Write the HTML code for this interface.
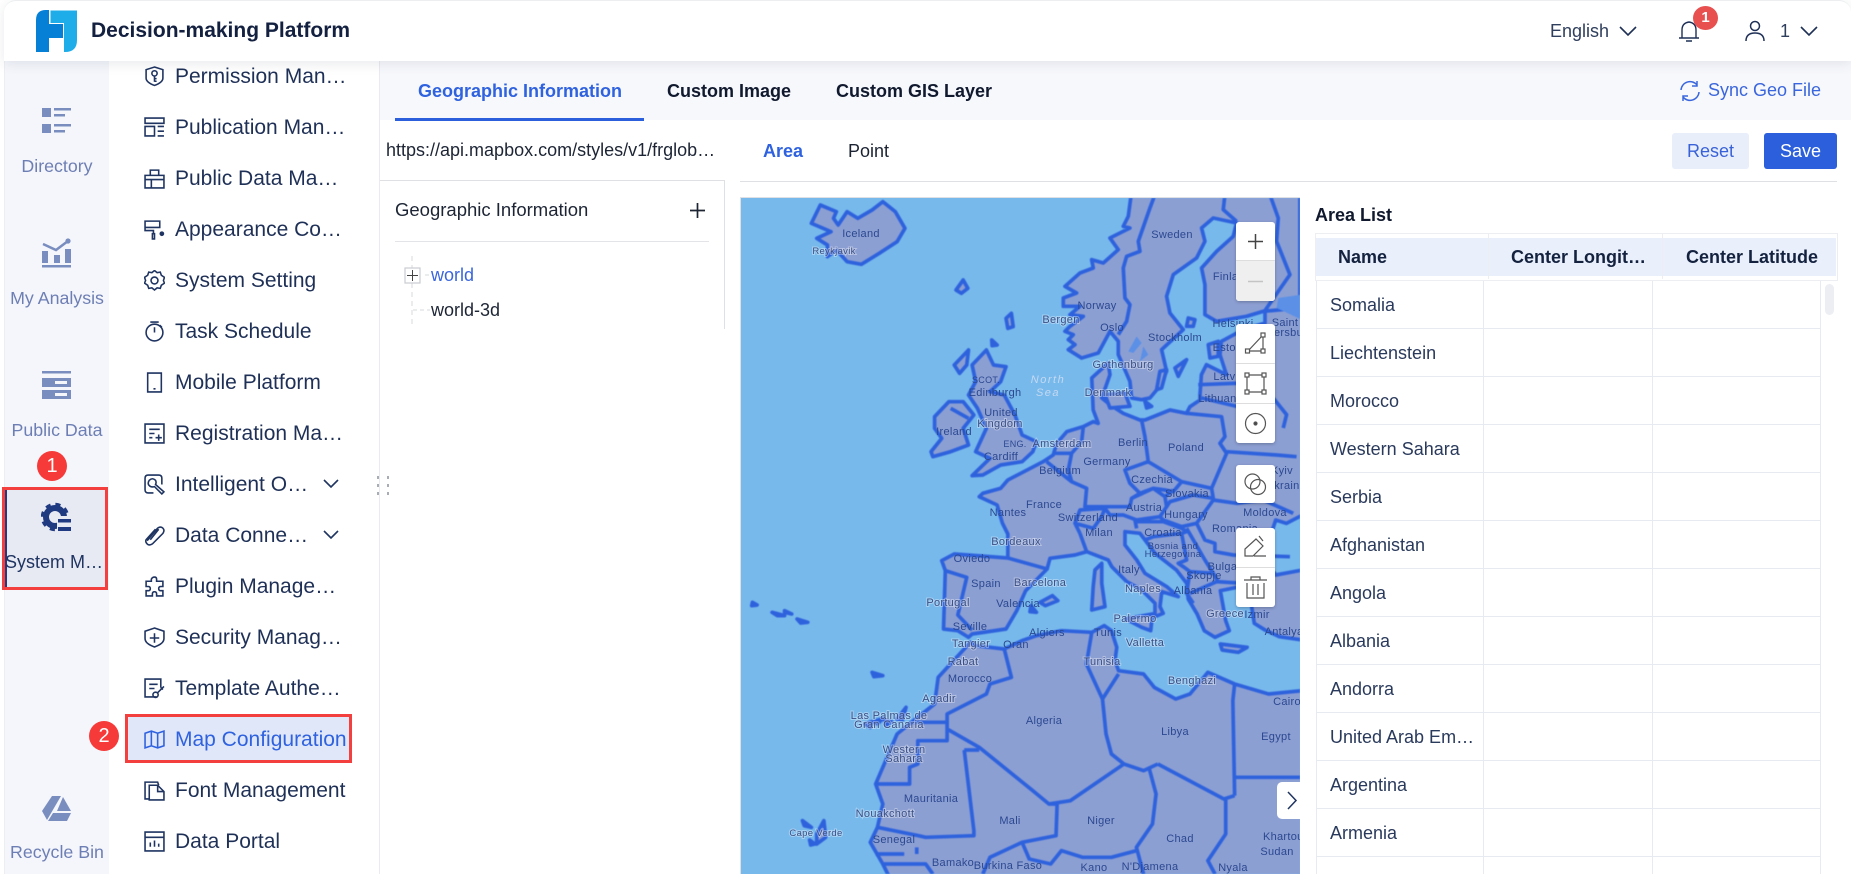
<!DOCTYPE html>
<html lang="en"><head><meta charset="utf-8"><title>Map Configuration</title>
<style>
html,body{margin:0;padding:0;background:#fff;font-family:"Liberation Sans",Arial,sans-serif;color:#1f3057}
#root{position:relative;width:1851px;height:874px;overflow:hidden;background:#fff}
.a{position:absolute}
.t{position:absolute;white-space:nowrap;line-height:30px;height:30px}
.n{font-size:21px;left:175px;color:#1f3057;margin-top:1px}
.r{font-size:17.800px;width:108px;left:3px;text-align:center;color:#6d7eb4}
.i{position:absolute;left:144px;width:21px;height:21px;fill:none;stroke:#1f3461;stroke-width:1.500}
.row{position:absolute;left:1316px;width:505px;height:47px;border-bottom:1px solid #e8eaf1}
.c{font-size:18px;left:1330px;color:#2a3a5c}
.h{font-size:18px;font-weight:bold;color:#14223f}
.ctl{position:absolute;left:1236px;width:39px;background:#fff;border-radius:3px;box-shadow:0 1px 3px rgba(0,0,0,.25)}
.ctl svg{display:block;position:absolute;left:7px;width:25px;height:25px;fill:none;stroke:#555;stroke-width:1.200}
.sep{position:absolute;left:0;width:39px;height:1px;background:#ddd}
#m text{font-size:11px;fill:#2b4890;text-anchor:middle;letter-spacing:.3px}
#m text.w{stroke:rgba(255,255,255,.35);stroke-width:2px;paint-order:stroke;fill:#3a4f85}
path{vector-effect:non-scaling-stroke}
.i path,.ctl path{vector-effect:none}
</style></head><body><div id="root">

<!-- rail -->
<div class="a" style="left:4px;top:61px;width:104px;height:813px;background:#f4f6fb;border-left:1px solid #eceef2;border-right:1px solid #eceef2"></div>
<div class="a" style="left:109px;top:61px;width:270px;height:813px;background:#fff;border-right:1px solid #e9ebf0"></div>
<div class="a" style="left:5px;top:489px;width:101px;height:99px;background:#e7e9f3"></div>
<div class="a" style="left:5px;top:489px;width:2px;height:99px;background:#1f3a80"></div>

<!-- rail icons -->
<svg class="a" style="left:42px;top:108px" width="30" height="26" fill="#7a8dbf"><rect x="0" y="0" width="9" height="9"/><rect x="0" y="16" width="9" height="9"/><rect x="12" y="0" width="17" height="2.500"/><rect x="12" y="6" width="11" height="2.500"/><rect x="12" y="16" width="17" height="2.500"/><rect x="12" y="22" width="11" height="2.500"/></svg>
<svg class="a" style="left:42px;top:238px" width="30" height="30" fill="#7a8dbf"><rect x="0" y="27" width="29" height="2.500"/><rect x="0" y="13" width="6" height="12"/><rect x="12" y="17" width="6" height="8"/><rect x="23" y="11" width="6" height="14"/><path d="M1 6 L14 12 L26 3" fill="none" stroke="#7a8dbf" stroke-width="2.500"/><circle cx="26" cy="3" r="2.600"/></svg>
<svg class="a" style="left:42px;top:370px" width="30" height="30" fill="#7a8dbf"><rect x="0" y="1" width="29" height="2.500"/><path d="M0 8h29v9H0zM13 11v3h12v-3zM0 20h29v9H0zM13 23v3h12v-3z" fill-rule="evenodd"/></svg>
<svg class="a" style="left:41px;top:500px" width="32" height="33"><circle cx="14" cy="17" r="9" fill="none" stroke="#1f3a80" stroke-width="6"/><circle cx="14" cy="17" r="12.500" fill="none" stroke="#1f3a80" stroke-width="3.500" stroke-dasharray="5 4.820"/><rect x="16" y="16" width="16" height="17" fill="#e7e9f3"/><rect x="17" y="19" width="13" height="3.500" fill="#1f3a80"/><rect x="17" y="27" width="13" height="4" fill="#1f3a80"/></svg>
<svg class="a" style="left:42px;top:795px" width="30" height="27" fill="#7a8dbf"><path d="M10 1H19L5 25 0 16z"/><path d="M21 2L29 16H15z"/><path d="M11 18H29L25 26H6z"/></svg>

<div class="t r" style="top:151px">Directory</div>
<div class="t r" style="top:283px">My Analysis</div>
<div class="t r" style="top:415px">Public Data</div>
<div class="t r" style="top:547px;color:#1f3461;font-size:18px;left:3px;text-align:left;padding-left:2px">System M…</div>
<div class="t r" style="top:837px">Recycle Bin</div>

<!-- nav selection -->
<div class="a" style="left:125px;top:714px;width:227px;height:49px;background:#e0e7f9"></div>

<!-- nav icons -->
<svg class="i" style="top:66px" viewBox="0 0 20 20"><path d="M10 1l8 2.500v8q0 4-8 7q-8-3-8-7v-8z"/><circle cx="10" cy="7" r="2.500"/><path d="M10 9.500V15M10 12h2M10 14.500h2"/></svg>
<svg class="i" style="top:117px" viewBox="0 0 20 20"><path d="M1 1h18v5H1zM1 9h9v9H1zM13 9h6M13 13.500h6M13 18h6"/></svg>
<svg class="i" style="top:168px" viewBox="0 0 20 20"><path d="M1 7h18v12H1zM6 7V2h8v5M1 11h18M7 11v8"/></svg>
<svg class="i" style="top:219px" viewBox="0 0 20 20"><path d="M1 2h14v6H1zM1 8v3h8v3M8 14h2v5H8z"/><circle cx="17" cy="14" r="1.500" fill="#1f3461"/></svg>
<svg class="i" style="top:270px" viewBox="0 0 20 20"><path d="M10 .5l2.500 2 3-.5 1 3 3 2-1 3 1 2.500-3 2-1 3-3-.5-2.500 2-2.500-2-3 .5-1-3-3-2 1-2.500-1-3 3-2 1-3 3 .5z"/><circle cx="10" cy="10" r="3.300"/></svg>
<svg class="i" style="top:321px" viewBox="0 0 20 20"><circle cx="10" cy="11" r="8"/><path d="M6 1h8M10 6v5M15 4l2 2"/></svg>
<svg class="i" style="top:372px" viewBox="0 0 20 20"><path d="M3.500 1h13v18h-13zM9 16h2"/></svg>
<svg class="i" style="top:423px" viewBox="0 0 20 20"><path d="M1 1h18v18H1zM5 6h10M5 10h5M11 14h6M14 11v6M5 14h3"/></svg>
<svg class="i" style="top:474px" viewBox="0 0 20 20"><path d="M9 18H4q-3 0-3-3V4q0-3 3-3h10q3 0 3 3v6"/><path d="M5 6q3-3 6 0 1 2 0 4l8 7-2 2-7-7q-3 1-5-1t0-5z"/></svg>
<svg class="i" style="top:525px" viewBox="0 0 20 20"><path d="M3 15L13 3q3-2 5 0t0 5L8 18q-3 2-5 0t-1-4L11 4M6 14l8-10"/></svg>
<svg class="i" style="top:576px" viewBox="0 0 20 20"><path d="M7 5V3q1-2 3-2t2 2v2h6v5h-2q-2 0-2 2t2 2h2v5h-6v-2q0-2-2-2t-2 2v2H2v-5h2q2 0 2-2T4 10H2V5z"/></svg>
<svg class="i" style="top:627px" viewBox="0 0 20 20"><path d="M10 1l9 3v7q0 5-9 8q-9-3-9-8V4z"/><path d="M10 6v9M5.500 10.500h9"/></svg>
<svg class="i" style="top:678px" viewBox="0 0 20 20"><path d="M12 18H1V1h15v8M5 6h8M5 10h5"/><circle cx="11" cy="16" r="2.500"/><path d="M13 14l6-6M16 9l2 2"/></svg>
<svg class="i" style="top:729px;stroke:#2f62df" viewBox="0 0 20 20"><path d="M1 4l6-2 6 2 6-2v14l-6 2-6-2-6 2zM7 2v14M13 4v14"/></svg>
<svg class="i" style="top:780px" viewBox="0 0 20 20"><path d="M5 18H1V2h12l1 3M5 5h8l6 6v8H5zM13 5v6h6"/></svg>
<svg class="i" style="top:831px" viewBox="0 0 20 20"><path d="M1 1h18v18H1zM1 6h18M6 15v-4M10 15V9M14 15v-3"/></svg>

<div class="t n" style="top:61px">Permission Man…</div>
<div class="t n" style="top:112px">Publication Man…</div>
<div class="t n" style="top:163px">Public Data Ma…</div>
<div class="t n" style="top:214px">Appearance Co…</div>
<div class="t n" style="top:265px">System Setting</div>
<div class="t n" style="top:316px">Task Schedule</div>
<div class="t n" style="top:367px">Mobile Platform</div>
<div class="t n" style="top:418px">Registration Ma…</div>
<div class="t n" style="top:469px">Intelligent O…</div>
<div class="t n" style="top:520px">Data Conne…</div>
<div class="t n" style="top:571px">Plugin Manage…</div>
<div class="t n" style="top:622px">Security Manag…</div>
<div class="t n" style="top:673px">Template Authe…</div>
<div class="t n" style="top:724px;color:#2f62df">Map Configuration</div>
<div class="t n" style="top:775px">Font Management</div>
<div class="t n" style="top:826px">Data Portal</div>
<svg class="a" style="left:323px;top:478px" width="17" height="12" fill="none" stroke="#1f3461" stroke-width="1.600"><path d="M1 2l7 7 7-7"/></svg>
<svg class="a" style="left:323px;top:529px" width="17" height="12" fill="none" stroke="#1f3461" stroke-width="1.600"><path d="M1 2l7 7 7-7"/></svg>

<!-- main top -->
<div class="a" style="left:380px;top:61px;width:1471px;height:59px;background:#f7f8fc"></div>
<div class="a" style="left:395px;top:118px;width:249px;height:3px;background:#2b5fdb"></div>
<div class="t" style="left:418px;top:76px;font-size:18px;font-weight:bold;color:#2f62df">Geographic Information</div>
<div class="t" style="left:667px;top:76px;font-size:18px;font-weight:bold;color:#10192e">Custom Image</div>
<div class="t" style="left:836px;top:76px;font-size:18px;font-weight:bold;color:#10192e">Custom GIS Layer</div>
<svg class="a" style="left:1679px;top:80px" width="22" height="22" fill="none" stroke="#3a66dd" stroke-width="1.500"><path d="M2 10a9 9 0 0 1 16-5M20 12a9 9 0 0 1-16 5M18 1v5h-5M4 21v-5h5"/></svg>
<div class="t" style="left:1708px;top:75px;font-size:18px;color:#3a66dd">Sync Geo File</div>

<!-- toolbar -->
<div class="t" style="left:386px;top:135px;font-size:18px;color:#1d2535">https://api.mapbox.com/styles/v1/frglob…</div>
<div class="t" style="left:763px;top:136px;font-size:18px;font-weight:bold;color:#2f62df">Area</div>
<div class="t" style="left:848px;top:136px;font-size:18px;color:#1b2333">Point</div>
<div class="a" style="left:1672px;top:133px;width:77px;height:36px;background:#e8effb;border-radius:3px;color:#3a62d8;font-size:18px;line-height:36px;text-align:center">Reset</div>
<div class="a" style="left:1764px;top:133px;width:73px;height:36px;background:#2b5fdb;border-radius:3px;color:#fff;font-size:18px;line-height:36px;text-align:center">Save</div>
<div class="a" style="left:740px;top:181px;width:1097px;height:1px;background:#dfe0e4"></div>

<!-- left panel -->
<div class="a" style="left:380px;top:180px;width:344px;height:148px;border-top:1px solid #dfe0e4;border-right:1px solid #dfe0e4"></div>
<div class="t" style="left:395px;top:195px;font-size:18.500px;color:#1d2535">Geographic Information</div>
<svg class="a" style="left:689px;top:202px" width="17" height="17" stroke="#1d2535" stroke-width="1.700"><path d="M1 8.500h15M8.500 1v15"/></svg>
<div class="a" style="left:395px;top:241px;width:314px;height:1px;background:#e3e4e8"></div>
<svg class="a" style="left:400px;top:254px" width="32" height="75" fill="none"><path d="M12 2v70" stroke="#d5d8de" stroke-dasharray="5 4"/><rect x="5" y="14" width="15" height="15" fill="#fff" stroke="#c9ccd3" stroke-width="1.200"/><path d="M7 21.500h11M12.500 16v11" stroke="#444"/><path d="M25 21h5M13 56h17" stroke="#d5d8de" stroke-dasharray="4 3"/></svg>
<div class="t" style="left:431px;top:260px;font-size:18px;color:#3a66dd">world</div>
<div class="t" style="left:431px;top:295px;font-size:18px;color:#1d2535">world-3d</div>
<svg class="a" style="left:376px;top:475px" width="16" height="22" fill="#a9adb5"><rect x="1" y="1" width="2" height="3"/><rect x="1" y="9" width="2" height="3"/><rect x="1" y="17" width="2" height="3"/><rect x="11" y="1" width="2" height="3"/><rect x="11" y="9" width="2" height="3"/><rect x="11" y="17" width="2" height="3"/></svg>

<!-- map -->
<div class="a" style="left:740px;top:197px;width:1px;height:677px;background:#dfe0e4"></div>
<div class="a" style="left:741px;top:197px;width:559px;height:1px;background:#dfe0e4"></div>
<div class="a" style="left:741px;top:198px;width:559px;height:676px;overflow:hidden;background:#78b9ec">
<svg class="a" style="left:0;top:0;filter:blur(.4px)" width="559" height="676" viewBox="3 9 1565 2028" preserveAspectRatio="none">
<g fill="#8c9fd3" stroke="#2e62dd" stroke-width="3.700" stroke-linejoin="round">
<path d="M200 85L225 30 270 50 262 70 275 90 300 50 330 70 370 45 400 20 435 50 462 100 440 140 390 175 340 208 300 200 270 165 245 185 245 150 215 130 255 110z"/>
<path d="M605 285L625 255 638 280 620 295zM745 370L760 355 765 395 750 400zM705 435L720 450 706 452zM600 510L640 465 635 510 615 535z"/>
<path d="M650 510L690 465 710 510 745 515 730 560 700 590 740 600 770 660 790 720 830 740 820 770 790 800 730 810 680 840 650 842 700 790 660 770 690 700 665 640 640 600 660 560z"/>
<path d="M545 665L585 620 625 620 655 660 625 700 640 750 590 770 540 785 535 770 565 730 545 700z"/>
<!-- mainland -->
<path d="M565 1097L600 1077 750 1089 750 1017 735 985 720 930 670 905 680 895 730 880 750 855 849 800 877 780 887 745 915 710 961 695 989 680 1003 685 989 645 985 549 1031 504 1036 539 1013 609 1036 629 1073 655 1120 675 1134 675 1204 645 1250 655 1260 635 1288 615 1288 599 1292 539 1306 509 1362 539 1344 479 1348 439 1409 404 1470 384 1470 345 1575 330 1575 960 1530 985 1500 975 1480 1040 1475 1100 1500 1140 1575 1125 1575 1335 1510 1325 1470 1305 1440 1285 1430 1217 1400 1175 1345 1187 1360 1277 1370 1307 1330 1327 1300 1307 1280 1257 1255 1212 1251 1165 1222 1125 1162 1075 1134 1035 1120 1015 1078 1010 1078 1050 1111 1095 1134 1135 1195 1175 1227 1205 1181 1190 1176 1235 1185 1255 1162 1265 1162 1225 1125 1185 1083 1160 1041 1115 1031 1095 971 1070 938 1080 868 1090 860 1122 800 1187 775 1247 745 1302 650 1317 640 1327 610 1307 570 1302 575 1127z"/>
<path d="M994 1125L1013 1105 1013 1165 1022 1235 985 1245 989 1175zM1080 1272L1155 1257 1150 1307 1125 1297zM840 1222L875 1202 890 1217 855 1232zM815 1232L830 1252 812 1250zM1345 1347L1420 1357 1395 1372 1350 1365zM35 1222L48 1230 33 1232zM90 1252L125 1262 105 1262zM125 1247L145 1257 125 1252zM160 1272L190 1282 170 1284zM370 1432L400 1442 375 1445zM350 1587L370 1580 365 1597zM375 1580L400 1570 385 1587zM405 1575L425 1580 410 1590zM440 1572L465 1537 455 1575zM175 1877L200 1897 180 1892zM235 1877L240 1927 215 1947 215 1917zM195 1935L210 1947 198 1950z"/>
<path d="M1575 1487L1480 1497 1385 1467 1310 1432 1260 1497 1220 1512 1160 1477 1130 1437 1060 1427 1050 1397 1055 1357 1040 1307 1020 1292 985 1312 900 1307 830 1322 790 1337 740 1362 660 1352 645 1342 555 1447 545 1527 480 1582 440 1617 400 1717 380 1767 400 1827 385 1897 365 1942 400 2007 420 2050 1575 2050z"/>
<g transform="translate(812,9) scale(.933,1)">
<path d="M305 -20L295 55 280 85 300 90 240 120 265 155 220 195 185 185 190 210 150 225 105 265 140 285 100 300 100 325 150 325 120 350 160 355 120 385 105 400 130 410 115 425 135 440 115 455 155 480 205 465 240 400 265 430 265 470 300 550 305 600 335 605 360 600 385 570 410 520 395 455 460 395 420 345 410 295 430 230 500 180 525 130 515 90 550 60 620 75 610 115 560 160 515 210 525 260 525 350 560 370 650 355 700 340 810 330 810 -20z"/>
<path d="M435 510L470 485 445 535zM535 440L565 430 565 475 540 480zM390 520L410 515 395 570 380 575zM475 360L495 365 490 385 470 385zM225 590L285 585 300 625 240 630zM345 610L365 625 350 630z"/>
</g></g>
<g fill="none" stroke="#2e62dd" stroke-width="3.700" stroke-linejoin="round">
<g transform="translate(812,9) scale(.933,1)">
<path d="M375 -10L360 30 325 130 330 160 290 175 280 210 285 300 300 320 290 370 265 410M585 -10L580 35 620 70M720 -10L745 60 740 130 780 230 700 345M505 560L640 555 730 600M515 600L620 625 730 600M730 600L770 650 760 690"/>
</g>
<g transform="translate(812,615) scale(.933,1)">
<path d="M160 80L155 125 125 160 75 160M125 160L115 210 125 245 170 265 165 320 215 320 300 320 305 295 370 265 405 290 410 320 390 350 320 360 280 345 240 345 225 325 215 350 190 385 135 370 150 330 225 325M50 185L100 225 125 245M335 60L345 110 355 185 285 210 300 250 330 280 305 295M355 185L455 245 430 275 405 270 370 265 330 280M470 40L575 50 585 110 570 130 590 160 560 230 545 265 455 245M430 270L405 290M545 265L550 295 490 285 420 305 410 320M410 320L390 350 400 360 455 380 500 370 550 300 620 310 700 300 790 340M590 155L740 165 800 170M500 370L525 420 555 430 555 455 610 465 780 470M150 400L135 370M150 400L170 455M315 360L320 385M320 365L400 365 455 385 470 395 455 400 370 410 345 420M470 385L525 480 550 520 480 515 460 500 445 490 470 480 455 400M550 520L565 545 640 550 660 540M480 580L560 545M480 515L470 580 490 610M560 545L640 550"/>
</g>
<path d="M750 1089L860 1122M575 1127L635 1147 610 1260 650 1305M740 1362L760 1447 700 1467 690 1497 580 1557 580 1582M480 1582H580V1637H498V1707L475 1717V1767H380M580 1602L670 1657 820 1787 865 1827 925 1817 1075 1707M628 1665H670M628 1665L655 1907V1922L520 1927 500 1922 385 1897M865 1827H888L885 1922 790 1942 700 1987 680 2037M1075 1707L1130 1727 1170 1707M1145 1717L1165 1797 1155 1887 1110 1957 1130 2037M1170 1707L1355 1812 1385 1802M1385 1467L1380 1517 1385 1802M1385 1747H1575M1360 1812V1917L1310 1997 1330 2037M1015 1512L1025 1617 1040 1677 1075 1707M985 1312L970 1407 1015 1512 1060 1437M790 1942L810 1992 870 2007 900 1967 960 1987 1040 1987 1110 1967M380 1977H460M400 2007H520L540 2037M495 1957V1977M590 640L640 670"/>
</g>
<g transform="translate(812,9) scale(.933,1)" fill="#5b90e6"><path d="M295 460L320 415 335 435 310 465zM745 300L815 290 815 365 740 330zM340 445L355 470 330 490z"/></g>
</svg>
</div>
<svg id="m" class="a" style="left:741px;top:198px;filter:blur(.3px)" width="559" height="676" viewBox="741 198 559 676">
<text x="861" y="237">Iceland</text><text class="w" x="834" y="254" style="font-size:9.500px">Reykjavik</text><text x="1172" y="238">Sweden</text><text x="1097" y="309">Norway</text><text x="1112" y="331">Oslo</text><text class="w" x="1061" y="323">Bergen</text><text x="1175" y="341">Stockholm</text><text class="w" x="1123" y="368">Gothenburg</text><text class="w" x="1108" y="396">Denmark</text>
<text x="1048" y="383" style="fill:#c4d9f2;font-style:italic;letter-spacing:1.500px">North</text><text x="1048" y="396" style="fill:#c4d9f2;font-style:italic;letter-spacing:1.500px">Sea</text>
<text x="986" y="383" style="font-size:9px">SCOT.</text><text x="995" y="396">Edinburgh</text><text x="1001" y="416">United</text><text class="w" x="1000" y="427">Kingdom</text><text x="954" y="435">Ireland</text><text x="1015" y="447" style="font-size:9px">ENG.</text><text x="1001" y="460">Cardiff</text><text class="w" x="1062" y="447">Amsterdam</text><text x="1133" y="446">Berlin</text><text x="1107" y="465">Germany</text><text x="1186" y="451">Poland</text><text x="1060" y="474">Belgium</text><text x="1152" y="483">Czechia</text><text x="1187" y="497">Slovakia</text><text x="1044" y="508">France</text><text x="1008" y="516">Nantes</text><text x="1088" y="521">Switzerland</text><text x="1144" y="511">Austria</text><text x="1186" y="518">Hungary</text><text x="1235" y="532">Romania</text><text x="1265" y="516">Moldova</text><text x="1282" y="474">Kyiv</text><text x="1286" y="489">Ukraine</text><text x="1222" y="402">Lithuania</text><text x="1229" y="380">Latvia</text><text x="1232" y="351">Estonia</text><text x="1233" y="327">Helsinki</text><text x="1285" y="326">Saint</text><text x="1285" y="336">Petersburg</text><text x="1232" y="280">Finland</text><text x="1099" y="536">Milan</text><text x="1163" y="536">Croatia</text>
<text class="w" x="1016" y="545">Bordeaux</text><text x="986" y="587">Spain</text><text class="w" x="1040" y="586">Barcelona</text><text x="1018" y="607">Valencia</text><text class="w" x="948" y="606">Portugal</text><text x="970" y="630">Seville</text><text x="972" y="562">Oviedo</text><text class="w" x="971" y="647">Tangier</text><text x="1016" y="648">Oran</text><text x="1047" y="636">Algiers</text><text x="1108" y="636">Tunis</text><text class="w" x="1102" y="665">Tunisia</text><text class="w" x="963" y="665">Rabat</text><text x="970" y="682">Morocco</text><text class="w" x="939" y="702">Agadir</text><text class="w" x="889" y="719">Las Palmas de</text><text class="w" x="889" y="728">Gran Canaria</text><text x="1044" y="724">Algeria</text><text x="1175" y="735">Libya</text><text x="1276" y="740">Egypt</text><text x="1287" y="705">Cairo</text><text class="w" x="1192" y="684">Benghazi</text><text class="w" x="1145" y="646">Valletta</text><text class="w" x="1135" y="622">Palermo</text><text class="w" x="1143" y="592">Naples</text><text x="1129" y="573">Italy</text><text x="1173" y="549" style="font-size:9.500px">Bosnia and</text><text x="1173" y="557" style="font-size:9.500px">Herzegovina</text><text x="1229" y="570">Bulgaria</text><text x="1204" y="579">Skopje</text><text x="1193" y="594">Albania</text><text class="w" x="1225" y="617">Greece</text><text x="1257" y="618">Izmir</text><text x="1284" y="635">Antalya</text><text class="w" x="904" y="753">Western</text><text class="w" x="904" y="762">Sahara</text><text x="931" y="802">Mauritania</text><text class="w" x="885" y="817">Nouakchott</text><text class="w" x="816" y="836" style="font-size:9.500px">Cape Verde</text><text x="1010" y="824">Mali</text><text x="1101" y="824">Niger</text><text x="1180" y="842">Chad</text><text x="1277" y="855">Sudan</text><text x="1288" y="840">Khartoum</text><text x="894" y="843">Senegal</text><text x="953" y="866">Bamako</text><text x="1008" y="869">Burkina Faso</text><text x="1094" y="871">Kano</text><text x="1150" y="870">N'Djamena</text><text x="1233" y="871">Nyala</text>
</svg>

<!-- map controls -->
<div class="ctl" style="top:222px;height:79px;overflow:hidden">
<div class="a" style="left:0;top:39px;width:39px;height:40px;background:#efefef"></div><div class="sep" style="top:38px"></div>
<svg style="top:7px" viewBox="0 0 25 25"><path d="M12.500 5v15M5 12.500h15" stroke="#444" stroke-width="1.500"/></svg>
<svg style="top:47px" viewBox="0 0 25 25"><path d="M5 12.500h15" stroke="#c4c4c4" stroke-width="1.500"/></svg>
</div>
<div class="ctl" style="top:324px;height:119px"><div class="sep" style="top:39px"></div><div class="sep" style="top:79px"></div>
<svg style="top:7px" viewBox="0 0 25 25"><path d="M5 20L20 4M5 20h15M20 4v16"/><rect x="2.500" y="18" width="4" height="4" fill="#fff"/><rect x="18" y="2" width="4" height="4" fill="#fff"/><rect x="18" y="18" width="4" height="4" fill="#fff"/></svg>
<svg style="top:47px" viewBox="0 0 25 25"><path d="M4 4h17v17H4z"/><rect x="2" y="2" width="4" height="4" fill="#fff"/><rect x="19" y="2" width="4" height="4" fill="#fff"/><rect x="2" y="19" width="4" height="4" fill="#fff"/><rect x="19" y="19" width="4" height="4" fill="#fff"/></svg>
<svg style="top:87px" viewBox="0 0 25 25"><circle cx="12.500" cy="12.500" r="10"/><circle cx="12.500" cy="12.500" r="1.500" fill="#444"/></svg>
</div>
<div class="ctl" style="top:465px;height:38px"><svg style="top:7px" viewBox="0 0 25 25"><circle cx="9.500" cy="9.500" r="7.500"/><circle cx="15" cy="15" r="7.500"/></svg></div>
<div class="ctl" style="top:528px;height:79px"><div class="sep" style="top:39px"></div>
<svg style="top:7px" viewBox="0 0 25 25"><path d="M2 21v-7L13 4l7 7L10 21zM11 21h12M16 1l4 5"/></svg>
<svg style="top:47px" viewBox="0 0 25 25"><path d="M1 5h23M8 5V2h9v3M4 8v15h17V8M10 9v11M15 9v11"/></svg>
</div>
<div class="a" style="left:1277px;top:782px;width:23px;height:37px;background:#fff;border-radius:5px 0 0 5px"></div>
<svg class="a" style="left:1285px;top:790px" width="13" height="21" fill="none" stroke="#1f3461" stroke-width="1.500"><path d="M3 2l8 8.500-8 8.500"/></svg>

<!-- table -->
<div class="t" style="left:1315px;top:200px;font-size:18px;font-weight:bold;color:#10192e">Area List</div>
<div class="a" style="left:1315px;top:233px;width:521px;height:46px;border:1px solid #eceef2;box-sizing:content-box"></div>
<div class="a" style="left:1316px;top:238px;width:520px;height:38px;background:#e9f0fb"></div>
<div class="a" style="left:1488px;top:233px;width:1px;height:46px;background:#eceef2"></div>
<div class="a" style="left:1662px;top:233px;width:1px;height:46px;background:#eceef2"></div>
<div class="t h" style="left:1338px;top:242px">Name</div>
<div class="t h" style="left:1511px;top:242px">Center Longit…</div>
<div class="t h" style="left:1686px;top:242px">Center Latitude</div>
<div class="a" style="left:1316px;top:281px;width:505px;height:593px;border-left:1px solid #e8eaf1;border-right:1px solid #e8eaf1;box-sizing:border-box"></div>
<div class="a" style="left:1483px;top:281px;width:1px;height:593px;background:#e8eaf1"></div>
<div class="a" style="left:1652px;top:281px;width:1px;height:593px;background:#e8eaf1"></div>
<div class="row" style="top:281px"></div><div class="row" style="top:329px"></div><div class="row" style="top:377px"></div><div class="row" style="top:425px"></div><div class="row" style="top:473px"></div><div class="row" style="top:521px"></div><div class="row" style="top:569px"></div><div class="row" style="top:617px"></div><div class="row" style="top:665px"></div><div class="row" style="top:713px"></div><div class="row" style="top:761px"></div><div class="row" style="top:809px"></div>
<div class="a" style="left:1825px;top:284px;width:9px;height:31px;background:#eceef3;border-radius:5px"></div>
<div class="t c" style="top:290px">Somalia</div>
<div class="t c" style="top:338px">Liechtenstein</div>
<div class="t c" style="top:386px">Morocco</div>
<div class="t c" style="top:434px">Western Sahara</div>
<div class="t c" style="top:482px">Serbia</div>
<div class="t c" style="top:530px">Afghanistan</div>
<div class="t c" style="top:578px">Angola</div>
<div class="t c" style="top:626px">Albania</div>
<div class="t c" style="top:674px">Andorra</div>
<div class="t c" style="top:722px">United Arab Em…</div>
<div class="t c" style="top:770px">Argentina</div>
<div class="t c" style="top:818px">Armenia</div>

<!-- annotations -->
<div class="a" style="left:2px;top:487px;width:106px;height:103px;border:3px solid #f43f3f;box-sizing:border-box"></div>
<div class="a" style="left:125px;top:714px;width:227px;height:49px;border:3px solid #f43f3f;box-sizing:border-box"></div>
<div class="a" style="left:37px;top:451px;width:30px;height:30px;border-radius:50%;background:#f63a3a;color:#fff;font-size:20px;line-height:30px;text-align:center">1</div>
<div class="a" style="left:89px;top:721px;width:30px;height:30px;border-radius:50%;background:#f63a3a;color:#fff;font-size:20px;line-height:30px;text-align:center">2</div>

<!-- top bar -->
<div class="a" style="left:4px;top:0;width:1847px;height:61px;background:#fff;border-top:1px solid #eceef0;box-sizing:border-box;border-radius:12px 12px 0 0;box-shadow:0 3px 12px rgba(40,50,80,.10)"></div>
<svg class="a" style="left:35px;top:10px" width="43" height="43"><path d="M1 10Q1 0 11 0H14V14H28V28H14V42H1z" fill="#0580d6"/><path d="M15.500 .5H42V30Q42 42 30 42H29V13H15.500z" fill="#1fade9"/></svg>
<div class="t" style="left:91px;top:16px;font-size:21px;font-weight:bold;color:#13203f">Decision-making Platform</div>
<div class="t" style="left:1550px;top:16px;font-size:18px;color:#2f3e5c">English</div>
<svg class="a" style="left:1619px;top:25px" width="18" height="12" fill="none" stroke="#1f3057" stroke-width="1.600"><path d="M1 2l8 8 8-8"/></svg>
<svg class="a" style="left:1678px;top:20px" width="22" height="23" fill="none" stroke="#1f3057" stroke-width="1.400"><path d="M1 18h20M4 18V10q0-7 7-8q7 1 7 8v8M8 21h6"/></svg>
<div class="a" style="left:1693px;top:6px;width:25px;height:24px;border-radius:50%;background:#e84f4f;color:#fff;font-size:15px;font-weight:bold;line-height:24px;text-align:center">1</div>
<svg class="a" style="left:1745px;top:20px" width="20" height="22" fill="none" stroke="#1f3057" stroke-width="1.500"><circle cx="10" cy="6" r="4.500"/><path d="M1 21q0-8 9-8t9 8"/></svg>
<div class="t" style="left:1780px;top:16px;font-size:18px;color:#2f3e5c">1</div>
<svg class="a" style="left:1800px;top:25px" width="18" height="12" fill="none" stroke="#1f3057" stroke-width="1.600"><path d="M1 2l8 8 8-8"/></svg>
</div></body></html>
